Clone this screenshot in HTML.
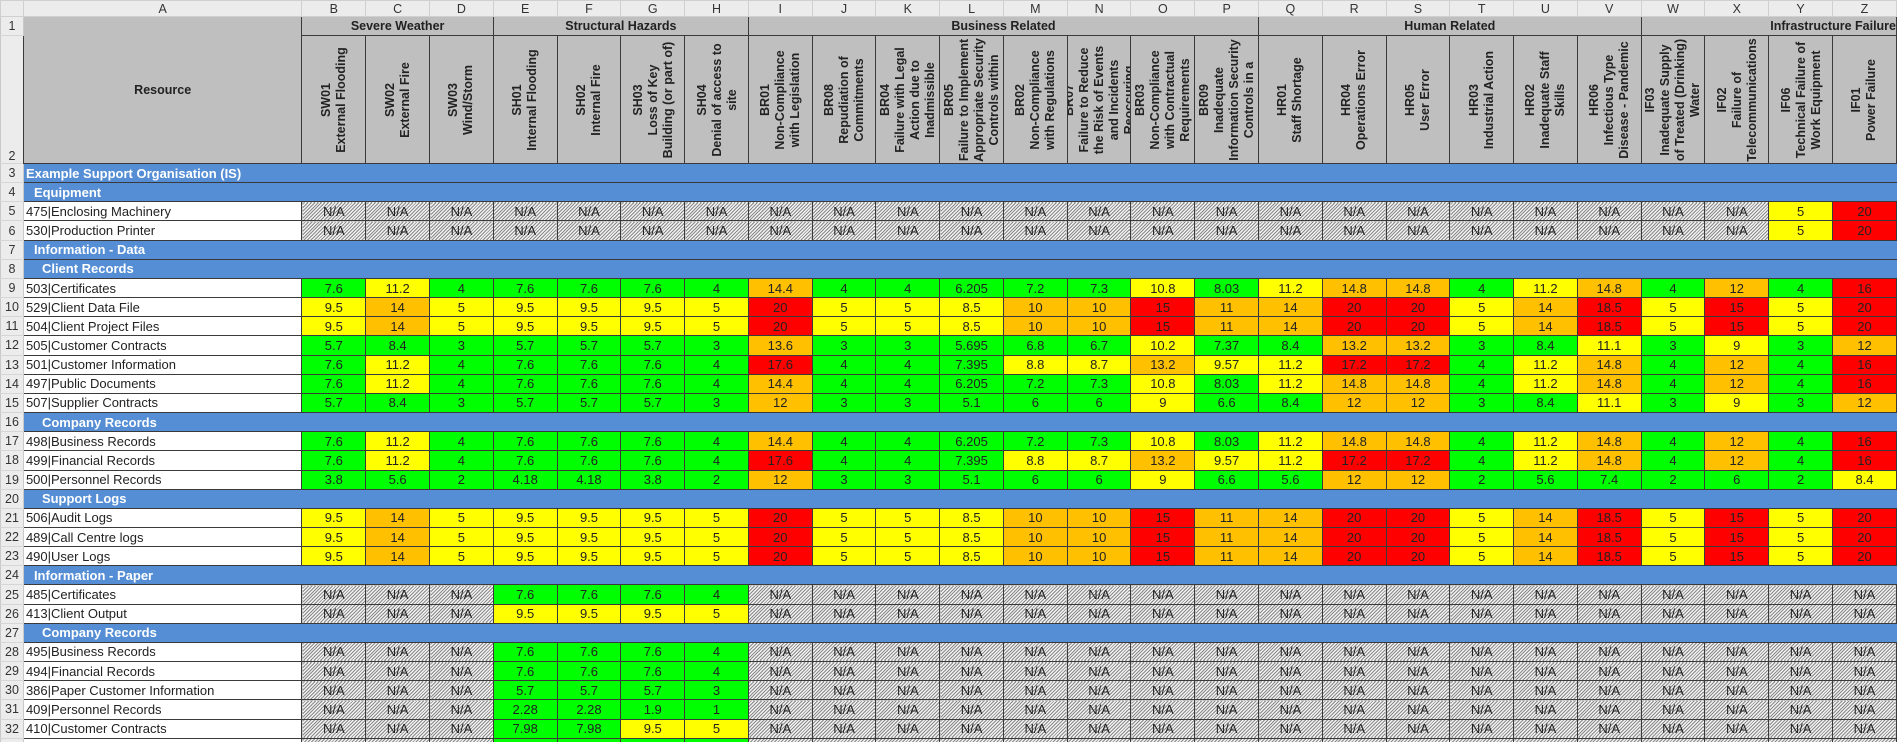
<!DOCTYPE html>
<html><head><meta charset="utf-8">
<style>
html,body{margin:0;padding:0;background:#fff;width:1897px;height:742px;overflow:hidden}
table{border-collapse:collapse;table-layout:fixed;font-family:"Liberation Sans",Arial,sans-serif;font-size:13px;color:#222}
td,th{padding:0;overflow:hidden;white-space:nowrap;border:1px solid #3a3a3a;font-weight:normal}
tr.d td,tr.d th,tr.s td,tr.s th{height:18.17px}
th.rh{background:#ececec;color:#333;border:1px solid #c9c9c9;border-bottom:1px solid #d6d6d6;text-align:center;font-size:12.5px}
tr.c th{background:#ececec;color:#333;border:1px solid #d0d0d0;height:15px;font-size:12.5px;text-align:center}
tr.r1 td,tr.r1 th.h{background:#bfbfbf;font-weight:bold;text-align:center;height:18px;font-size:12.5px}
tr.r2 td{background:#bfbfbf;height:127px;position:relative}
td.res{background:#bfbfbf;font-weight:bold;text-align:center;font-size:12.5px}
.v{position:absolute;left:50%;top:50%;width:124px;margin-left:-62px;margin-top:-31px;height:62px;transform:rotate(-90deg);display:flex;flex-direction:column;justify-content:center;text-align:center;font-weight:bold;font-size:12.5px;line-height:15px;white-space:normal;overflow:visible}
tr.d td{text-align:center}
tr.d td.a{text-align:left;padding-left:2px;background:#fff;border-right:1px solid #3a3a3a}
td.g{background:#00ff00}td.y{background:#ffff00}td.o{background:#ffc000}td.r{background:#ff0000}
td.n{background:repeating-linear-gradient(-45deg,#8a8a8a 0 1px,#f2f2f2 1px 2.4px);color:#222}
tr.s td{background:#558ed5;color:#fff;font-weight:bold;text-align:left;border-left:none;border-right:none}
</style></head><body>
<table>
<colgroup><col style="width:23px"><col style="width:279px"><col span="25" style="width:64px"></colgroup>
<tr class="c"><th></th><th>A</th><th>B</th><th>C</th><th>D</th><th>E</th><th>F</th><th>G</th><th>H</th><th>I</th><th>J</th><th>K</th><th>L</th><th>M</th><th>N</th><th>O</th><th>P</th><th>Q</th><th>R</th><th>S</th><th>T</th><th>U</th><th>V</th><th>W</th><th>X</th><th>Y</th><th>Z</th></tr>
<tr class="r1"><th class="rh">1</th><td class="res" rowspan="2">Resource</td><td colspan="3">Severe Weather</td><td colspan="4">Structural Hazards</td><td colspan="8">Business Related</td><td colspan="6">Human Related</td><td colspan="4" style="text-align:right;padding-right:0">Infrastructure Failure</td></tr>
<tr class="r2"><th class="rh" style="vertical-align:bottom">2</th>
<td><div class="v"><div>SW01</div><div>External Flooding</div></div></td>
<td><div class="v"><div>SW02</div><div>External Fire</div></div></td>
<td><div class="v"><div>SW03</div><div>Wind/Storm</div></div></td>
<td><div class="v"><div>SH01</div><div>Internal Flooding</div></div></td>
<td><div class="v"><div>SH02</div><div>Internal Fire</div></div></td>
<td><div class="v"><div>SH03</div><div>Loss of Key Building (or part of)</div></div></td>
<td><div class="v"><div>SH04</div><div>Denial of access to site</div></div></td>
<td><div class="v"><div>BR01</div><div>Non-Compliance with Legislation</div></div></td>
<td><div class="v"><div>BR08</div><div>Repudiation of Commitments</div></div></td>
<td><div class="v"><div>BR04</div><div>Failure with Legal Action due to Inadmissible</div></div></td>
<td><div class="v"><div>BR05</div><div>Failure to Implement Appropriate Security Controls within</div></div></td>
<td><div class="v"><div>BR02</div><div>Non-Compliance with Regulations</div></div></td>
<td><div class="v"><div>BR07</div><div>Failure to Reduce the Risk of Events and Incidents Reoccuring</div></div></td>
<td><div class="v"><div>BR03</div><div>Non-Compliance with Contractual Requirements</div></div></td>
<td><div class="v"><div>BR09</div><div>Inadequate Information Security Controls in a</div></div></td>
<td><div class="v"><div>HR01</div><div>Staff Shortage</div></div></td>
<td><div class="v"><div>HR04</div><div>Operations Error</div></div></td>
<td><div class="v"><div>HR05</div><div>User Error</div></div></td>
<td><div class="v"><div>HR03</div><div>Industrial Action</div></div></td>
<td><div class="v"><div>HR02</div><div>Inadequate Staff Skills</div></div></td>
<td><div class="v"><div>HR06</div><div>Infectious Type Disease - Pandemic</div></div></td>
<td><div class="v"><div>IF03</div><div>Inadequate Supply of Treated (Drinking) Water</div></div></td>
<td><div class="v"><div>IF02</div><div>Failure of Telecommunications</div></div></td>
<td><div class="v"><div>IF06</div><div>Technical Failure of Work Equipment</div></div></td>
<td><div class="v"><div>IF01</div><div>Power Failure</div></div></td>
</tr>
<tr class="s"><th class="rh">3</th><td colspan="26" style="padding-left:2px">Example Support Organisation (IS)</td></tr>
<tr class="s"><th class="rh">4</th><td colspan="26" style="padding-left:10px">Equipment</td></tr>
<tr class="d"><th class="rh">5</th><td class="a">475|Enclosing Machinery</td><td class="n">N/A</td><td class="n">N/A</td><td class="n">N/A</td><td class="n">N/A</td><td class="n">N/A</td><td class="n">N/A</td><td class="n">N/A</td><td class="n">N/A</td><td class="n">N/A</td><td class="n">N/A</td><td class="n">N/A</td><td class="n">N/A</td><td class="n">N/A</td><td class="n">N/A</td><td class="n">N/A</td><td class="n">N/A</td><td class="n">N/A</td><td class="n">N/A</td><td class="n">N/A</td><td class="n">N/A</td><td class="n">N/A</td><td class="n">N/A</td><td class="n">N/A</td><td class="y">5</td><td class="r">20</td></tr>
<tr class="d"><th class="rh">6</th><td class="a">530|Production Printer</td><td class="n">N/A</td><td class="n">N/A</td><td class="n">N/A</td><td class="n">N/A</td><td class="n">N/A</td><td class="n">N/A</td><td class="n">N/A</td><td class="n">N/A</td><td class="n">N/A</td><td class="n">N/A</td><td class="n">N/A</td><td class="n">N/A</td><td class="n">N/A</td><td class="n">N/A</td><td class="n">N/A</td><td class="n">N/A</td><td class="n">N/A</td><td class="n">N/A</td><td class="n">N/A</td><td class="n">N/A</td><td class="n">N/A</td><td class="n">N/A</td><td class="n">N/A</td><td class="y">5</td><td class="r">20</td></tr>
<tr class="s"><th class="rh">7</th><td colspan="26" style="padding-left:10px">Information - Data</td></tr>
<tr class="s"><th class="rh">8</th><td colspan="26" style="padding-left:18px">Client Records</td></tr>
<tr class="d"><th class="rh">9</th><td class="a">503|Certificates</td><td class="g">7.6</td><td class="y">11.2</td><td class="g">4</td><td class="g">7.6</td><td class="g">7.6</td><td class="g">7.6</td><td class="g">4</td><td class="o">14.4</td><td class="g">4</td><td class="g">4</td><td class="g">6.205</td><td class="g">7.2</td><td class="g">7.3</td><td class="y">10.8</td><td class="g">8.03</td><td class="y">11.2</td><td class="o">14.8</td><td class="o">14.8</td><td class="g">4</td><td class="y">11.2</td><td class="o">14.8</td><td class="g">4</td><td class="o">12</td><td class="g">4</td><td class="r">16</td></tr>
<tr class="d"><th class="rh">10</th><td class="a">529|Client Data File</td><td class="y">9.5</td><td class="o">14</td><td class="y">5</td><td class="y">9.5</td><td class="y">9.5</td><td class="y">9.5</td><td class="y">5</td><td class="r">20</td><td class="y">5</td><td class="y">5</td><td class="y">8.5</td><td class="o">10</td><td class="o">10</td><td class="r">15</td><td class="o">11</td><td class="o">14</td><td class="r">20</td><td class="r">20</td><td class="y">5</td><td class="o">14</td><td class="r">18.5</td><td class="y">5</td><td class="r">15</td><td class="y">5</td><td class="r">20</td></tr>
<tr class="d"><th class="rh">11</th><td class="a">504|Client Project Files</td><td class="y">9.5</td><td class="o">14</td><td class="y">5</td><td class="y">9.5</td><td class="y">9.5</td><td class="y">9.5</td><td class="y">5</td><td class="r">20</td><td class="y">5</td><td class="y">5</td><td class="y">8.5</td><td class="o">10</td><td class="o">10</td><td class="r">15</td><td class="o">11</td><td class="o">14</td><td class="r">20</td><td class="r">20</td><td class="y">5</td><td class="o">14</td><td class="r">18.5</td><td class="y">5</td><td class="r">15</td><td class="y">5</td><td class="r">20</td></tr>
<tr class="d"><th class="rh">12</th><td class="a">505|Customer Contracts</td><td class="g">5.7</td><td class="g">8.4</td><td class="g">3</td><td class="g">5.7</td><td class="g">5.7</td><td class="g">5.7</td><td class="g">3</td><td class="o">13.6</td><td class="g">3</td><td class="g">3</td><td class="g">5.695</td><td class="g">6.8</td><td class="g">6.7</td><td class="y">10.2</td><td class="g">7.37</td><td class="g">8.4</td><td class="o">13.2</td><td class="o">13.2</td><td class="g">3</td><td class="g">8.4</td><td class="y">11.1</td><td class="g">3</td><td class="y">9</td><td class="g">3</td><td class="o">12</td></tr>
<tr class="d"><th class="rh">13</th><td class="a">501|Customer Information</td><td class="g">7.6</td><td class="y">11.2</td><td class="g">4</td><td class="g">7.6</td><td class="g">7.6</td><td class="g">7.6</td><td class="g">4</td><td class="r">17.6</td><td class="g">4</td><td class="g">4</td><td class="g">7.395</td><td class="y">8.8</td><td class="y">8.7</td><td class="o">13.2</td><td class="y">9.57</td><td class="y">11.2</td><td class="r">17.2</td><td class="r">17.2</td><td class="g">4</td><td class="y">11.2</td><td class="o">14.8</td><td class="g">4</td><td class="o">12</td><td class="g">4</td><td class="r">16</td></tr>
<tr class="d"><th class="rh">14</th><td class="a">497|Public Documents</td><td class="g">7.6</td><td class="y">11.2</td><td class="g">4</td><td class="g">7.6</td><td class="g">7.6</td><td class="g">7.6</td><td class="g">4</td><td class="o">14.4</td><td class="g">4</td><td class="g">4</td><td class="g">6.205</td><td class="g">7.2</td><td class="g">7.3</td><td class="y">10.8</td><td class="g">8.03</td><td class="y">11.2</td><td class="o">14.8</td><td class="o">14.8</td><td class="g">4</td><td class="y">11.2</td><td class="o">14.8</td><td class="g">4</td><td class="o">12</td><td class="g">4</td><td class="r">16</td></tr>
<tr class="d"><th class="rh">15</th><td class="a">507|Supplier Contracts</td><td class="g">5.7</td><td class="g">8.4</td><td class="g">3</td><td class="g">5.7</td><td class="g">5.7</td><td class="g">5.7</td><td class="g">3</td><td class="o">12</td><td class="g">3</td><td class="g">3</td><td class="g">5.1</td><td class="g">6</td><td class="g">6</td><td class="y">9</td><td class="g">6.6</td><td class="g">8.4</td><td class="o">12</td><td class="o">12</td><td class="g">3</td><td class="g">8.4</td><td class="y">11.1</td><td class="g">3</td><td class="y">9</td><td class="g">3</td><td class="o">12</td></tr>
<tr class="s"><th class="rh">16</th><td colspan="26" style="padding-left:18px">Company Records</td></tr>
<tr class="d"><th class="rh">17</th><td class="a">498|Business Records</td><td class="g">7.6</td><td class="y">11.2</td><td class="g">4</td><td class="g">7.6</td><td class="g">7.6</td><td class="g">7.6</td><td class="g">4</td><td class="o">14.4</td><td class="g">4</td><td class="g">4</td><td class="g">6.205</td><td class="g">7.2</td><td class="g">7.3</td><td class="y">10.8</td><td class="g">8.03</td><td class="y">11.2</td><td class="o">14.8</td><td class="o">14.8</td><td class="g">4</td><td class="y">11.2</td><td class="o">14.8</td><td class="g">4</td><td class="o">12</td><td class="g">4</td><td class="r">16</td></tr>
<tr class="d"><th class="rh">18</th><td class="a">499|Financial Records</td><td class="g">7.6</td><td class="y">11.2</td><td class="g">4</td><td class="g">7.6</td><td class="g">7.6</td><td class="g">7.6</td><td class="g">4</td><td class="r">17.6</td><td class="g">4</td><td class="g">4</td><td class="g">7.395</td><td class="y">8.8</td><td class="y">8.7</td><td class="o">13.2</td><td class="y">9.57</td><td class="y">11.2</td><td class="r">17.2</td><td class="r">17.2</td><td class="g">4</td><td class="y">11.2</td><td class="o">14.8</td><td class="g">4</td><td class="o">12</td><td class="g">4</td><td class="r">16</td></tr>
<tr class="d"><th class="rh">19</th><td class="a">500|Personnel Records</td><td class="g">3.8</td><td class="g">5.6</td><td class="g">2</td><td class="g">4.18</td><td class="g">4.18</td><td class="g">3.8</td><td class="g">2</td><td class="o">12</td><td class="g">3</td><td class="g">3</td><td class="g">5.1</td><td class="g">6</td><td class="g">6</td><td class="y">9</td><td class="g">6.6</td><td class="g">5.6</td><td class="o">12</td><td class="o">12</td><td class="g">2</td><td class="g">5.6</td><td class="g">7.4</td><td class="g">2</td><td class="g">6</td><td class="g">2</td><td class="y">8.4</td></tr>
<tr class="s"><th class="rh">20</th><td colspan="26" style="padding-left:18px">Support Logs</td></tr>
<tr class="d"><th class="rh">21</th><td class="a">506|Audit Logs</td><td class="y">9.5</td><td class="o">14</td><td class="y">5</td><td class="y">9.5</td><td class="y">9.5</td><td class="y">9.5</td><td class="y">5</td><td class="r">20</td><td class="y">5</td><td class="y">5</td><td class="y">8.5</td><td class="o">10</td><td class="o">10</td><td class="r">15</td><td class="o">11</td><td class="o">14</td><td class="r">20</td><td class="r">20</td><td class="y">5</td><td class="o">14</td><td class="r">18.5</td><td class="y">5</td><td class="r">15</td><td class="y">5</td><td class="r">20</td></tr>
<tr class="d"><th class="rh">22</th><td class="a">489|Call Centre logs</td><td class="y">9.5</td><td class="o">14</td><td class="y">5</td><td class="y">9.5</td><td class="y">9.5</td><td class="y">9.5</td><td class="y">5</td><td class="r">20</td><td class="y">5</td><td class="y">5</td><td class="y">8.5</td><td class="o">10</td><td class="o">10</td><td class="r">15</td><td class="o">11</td><td class="o">14</td><td class="r">20</td><td class="r">20</td><td class="y">5</td><td class="o">14</td><td class="r">18.5</td><td class="y">5</td><td class="r">15</td><td class="y">5</td><td class="r">20</td></tr>
<tr class="d"><th class="rh">23</th><td class="a">490|User Logs</td><td class="y">9.5</td><td class="o">14</td><td class="y">5</td><td class="y">9.5</td><td class="y">9.5</td><td class="y">9.5</td><td class="y">5</td><td class="r">20</td><td class="y">5</td><td class="y">5</td><td class="y">8.5</td><td class="o">10</td><td class="o">10</td><td class="r">15</td><td class="o">11</td><td class="o">14</td><td class="r">20</td><td class="r">20</td><td class="y">5</td><td class="o">14</td><td class="r">18.5</td><td class="y">5</td><td class="r">15</td><td class="y">5</td><td class="r">20</td></tr>
<tr class="s"><th class="rh">24</th><td colspan="26" style="padding-left:10px">Information - Paper</td></tr>
<tr class="d"><th class="rh">25</th><td class="a">485|Certificates</td><td class="n">N/A</td><td class="n">N/A</td><td class="n">N/A</td><td class="g">7.6</td><td class="g">7.6</td><td class="g">7.6</td><td class="g">4</td><td class="n">N/A</td><td class="n">N/A</td><td class="n">N/A</td><td class="n">N/A</td><td class="n">N/A</td><td class="n">N/A</td><td class="n">N/A</td><td class="n">N/A</td><td class="n">N/A</td><td class="n">N/A</td><td class="n">N/A</td><td class="n">N/A</td><td class="n">N/A</td><td class="n">N/A</td><td class="n">N/A</td><td class="n">N/A</td><td class="n">N/A</td><td class="n">N/A</td></tr>
<tr class="d"><th class="rh">26</th><td class="a">413|Client Output</td><td class="n">N/A</td><td class="n">N/A</td><td class="n">N/A</td><td class="y">9.5</td><td class="y">9.5</td><td class="y">9.5</td><td class="y">5</td><td class="n">N/A</td><td class="n">N/A</td><td class="n">N/A</td><td class="n">N/A</td><td class="n">N/A</td><td class="n">N/A</td><td class="n">N/A</td><td class="n">N/A</td><td class="n">N/A</td><td class="n">N/A</td><td class="n">N/A</td><td class="n">N/A</td><td class="n">N/A</td><td class="n">N/A</td><td class="n">N/A</td><td class="n">N/A</td><td class="n">N/A</td><td class="n">N/A</td></tr>
<tr class="s"><th class="rh">27</th><td colspan="26" style="padding-left:18px">Company Records</td></tr>
<tr class="d"><th class="rh">28</th><td class="a">495|Business Records</td><td class="n">N/A</td><td class="n">N/A</td><td class="n">N/A</td><td class="g">7.6</td><td class="g">7.6</td><td class="g">7.6</td><td class="g">4</td><td class="n">N/A</td><td class="n">N/A</td><td class="n">N/A</td><td class="n">N/A</td><td class="n">N/A</td><td class="n">N/A</td><td class="n">N/A</td><td class="n">N/A</td><td class="n">N/A</td><td class="n">N/A</td><td class="n">N/A</td><td class="n">N/A</td><td class="n">N/A</td><td class="n">N/A</td><td class="n">N/A</td><td class="n">N/A</td><td class="n">N/A</td><td class="n">N/A</td></tr>
<tr class="d"><th class="rh">29</th><td class="a">494|Financial Records</td><td class="n">N/A</td><td class="n">N/A</td><td class="n">N/A</td><td class="g">7.6</td><td class="g">7.6</td><td class="g">7.6</td><td class="g">4</td><td class="n">N/A</td><td class="n">N/A</td><td class="n">N/A</td><td class="n">N/A</td><td class="n">N/A</td><td class="n">N/A</td><td class="n">N/A</td><td class="n">N/A</td><td class="n">N/A</td><td class="n">N/A</td><td class="n">N/A</td><td class="n">N/A</td><td class="n">N/A</td><td class="n">N/A</td><td class="n">N/A</td><td class="n">N/A</td><td class="n">N/A</td><td class="n">N/A</td></tr>
<tr class="d"><th class="rh">30</th><td class="a">386|Paper Customer Information</td><td class="n">N/A</td><td class="n">N/A</td><td class="n">N/A</td><td class="g">5.7</td><td class="g">5.7</td><td class="g">5.7</td><td class="g">3</td><td class="n">N/A</td><td class="n">N/A</td><td class="n">N/A</td><td class="n">N/A</td><td class="n">N/A</td><td class="n">N/A</td><td class="n">N/A</td><td class="n">N/A</td><td class="n">N/A</td><td class="n">N/A</td><td class="n">N/A</td><td class="n">N/A</td><td class="n">N/A</td><td class="n">N/A</td><td class="n">N/A</td><td class="n">N/A</td><td class="n">N/A</td><td class="n">N/A</td></tr>
<tr class="d"><th class="rh">31</th><td class="a">409|Personnel Records</td><td class="n">N/A</td><td class="n">N/A</td><td class="n">N/A</td><td class="g">2.28</td><td class="g">2.28</td><td class="g">1.9</td><td class="g">1</td><td class="n">N/A</td><td class="n">N/A</td><td class="n">N/A</td><td class="n">N/A</td><td class="n">N/A</td><td class="n">N/A</td><td class="n">N/A</td><td class="n">N/A</td><td class="n">N/A</td><td class="n">N/A</td><td class="n">N/A</td><td class="n">N/A</td><td class="n">N/A</td><td class="n">N/A</td><td class="n">N/A</td><td class="n">N/A</td><td class="n">N/A</td><td class="n">N/A</td></tr>
<tr class="d"><th class="rh">32</th><td class="a">410|Customer Contracts</td><td class="n">N/A</td><td class="n">N/A</td><td class="n">N/A</td><td class="g">7.98</td><td class="g">7.98</td><td class="y">9.5</td><td class="y">5</td><td class="n">N/A</td><td class="n">N/A</td><td class="n">N/A</td><td class="n">N/A</td><td class="n">N/A</td><td class="n">N/A</td><td class="n">N/A</td><td class="n">N/A</td><td class="n">N/A</td><td class="n">N/A</td><td class="n">N/A</td><td class="n">N/A</td><td class="n">N/A</td><td class="n">N/A</td><td class="n">N/A</td><td class="n">N/A</td><td class="n">N/A</td><td class="n">N/A</td></tr>
<tr class="d"><th class="rh">33</th><td class="a"></td><td class="n"></td><td class="n"></td><td class="n"></td><td class="g"></td><td class="g"></td><td class="g"></td><td class="g"></td><td class="n"></td><td class="n"></td><td class="n"></td><td class="n"></td><td class="n"></td><td class="n"></td><td class="n"></td><td class="n"></td><td class="n"></td><td class="n"></td><td class="n"></td><td class="n"></td><td class="n"></td><td class="n"></td><td class="n"></td><td class="n"></td><td class="n"></td><td class="n"></td></tr>
</table>
</body></html>
